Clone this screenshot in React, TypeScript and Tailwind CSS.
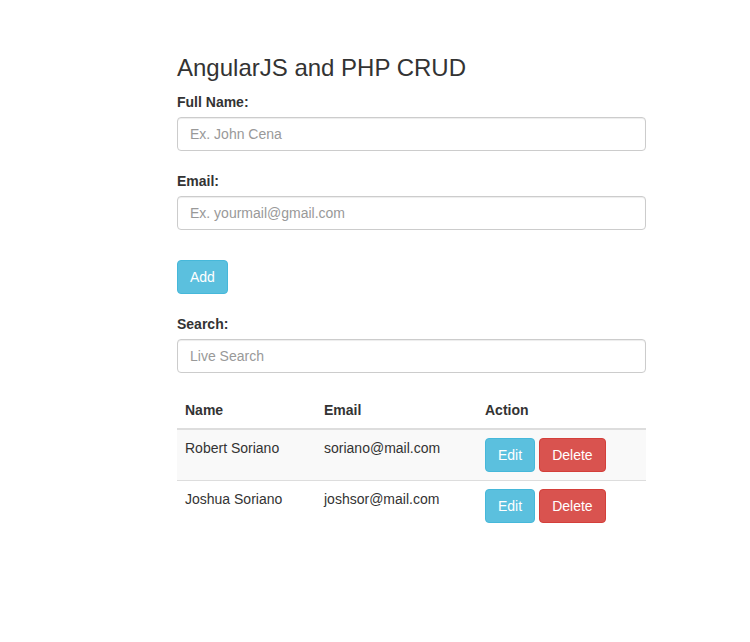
import { useState } from 'react';

interface Member {
  id: number;
  name: string;
  email: string;
}

const initialMembers: Member[] = [
  { id: 1, name: 'Robert Soriano', email: 'soriano@mail.com' },
  { id: 2, name: 'Joshua Soriano', email: 'joshsor@mail.com' },
];

export default function App() {
  const [members] = useState<Member[]>(initialMembers);
  const [search, setSearch] = useState('');

  const inputClass =
    'block w-full h-[34px] px-3 py-1.5 text-sm leading-5 text-[#555] bg-white border border-[#ccc] rounded shadow-[inset_0_1px_1px_rgba(0,0,0,0.075)] placeholder:text-[#999] outline-none';
  const labelClass = 'block text-sm leading-5 font-bold text-[#333] mb-[5px]';

  const filtered = members.filter(
    (m) =>
      m.name.toLowerCase().includes(search.toLowerCase()) ||
      m.email.toLowerCase().includes(search.toLowerCase())
  );

  return (
    <div className="min-h-[642px] bg-white pt-[55px] pl-[177px] font-['Liberation_Sans',Arial,sans-serif] text-[#333]">
      <div className="w-[469px]">
        {/* Heading */}
        <h3 className="text-[24px] leading-[26px] font-normal mb-[11px]">AngularJS and PHP CRUD</h3>

        {/* Form */}
        <div className="mb-5">
          <label className={labelClass}>Full Name:</label>
          <input type="text" placeholder="Ex. John Cena" className={inputClass} />
        </div>
        <div>
          <label className={labelClass}>Email:</label>
          <input type="text" placeholder="Ex. yourmail@gmail.com" className={inputClass} />
        </div>

        <button className="mt-[30px] h-[34px] px-3 text-sm leading-5 text-white bg-[#5bc0de] border border-[#46b8da] rounded">
          Add
        </button>

        {/* Search */}
        <div className="mt-5">
          <label className={labelClass}>Search:</label>
          <input
            type="text"
            placeholder="Live Search"
            value={search}
            onChange={(e) => setSearch(e.target.value)}
            className={inputClass}
          />
        </div>

        {/* Table */}
        <table className="w-full mt-[19px] border-collapse text-sm leading-5">
          <thead>
            <tr>
              <th className="w-[139px] p-2 text-left font-bold align-bottom border-b-2 border-[#ddd]">Name</th>
              <th className="w-[161px] p-2 text-left font-bold align-bottom border-b-2 border-[#ddd]">Email</th>
              <th className="p-2 text-left font-bold align-bottom border-b-2 border-[#ddd]">Action</th>
            </tr>
          </thead>
          <tbody>
            {filtered.map((m, i) => (
              <tr key={m.id} className={i % 2 === 0 ? 'bg-[#f9f9f9]' : 'bg-white'}>
                <td className="p-2 align-top border-t border-[#ddd]">{m.name}</td>
                <td className="p-2 align-top border-t border-[#ddd]">{m.email}</td>
                <td className="p-2 align-top border-t border-[#ddd]">
                  <div className="flex gap-1">
                    <button className="h-[34px] px-3 text-sm leading-5 text-white bg-[#5bc0de] border border-[#46b8da] rounded">
                      Edit
                    </button>
                    <button className="h-[34px] px-3 text-sm leading-5 text-white bg-[#d9534f] border border-[#d43f3a] rounded">
                      Delete
                    </button>
                  </div>
                </td>
              </tr>
            ))}
          </tbody>
        </table>
      </div>
    </div>
  );
}
